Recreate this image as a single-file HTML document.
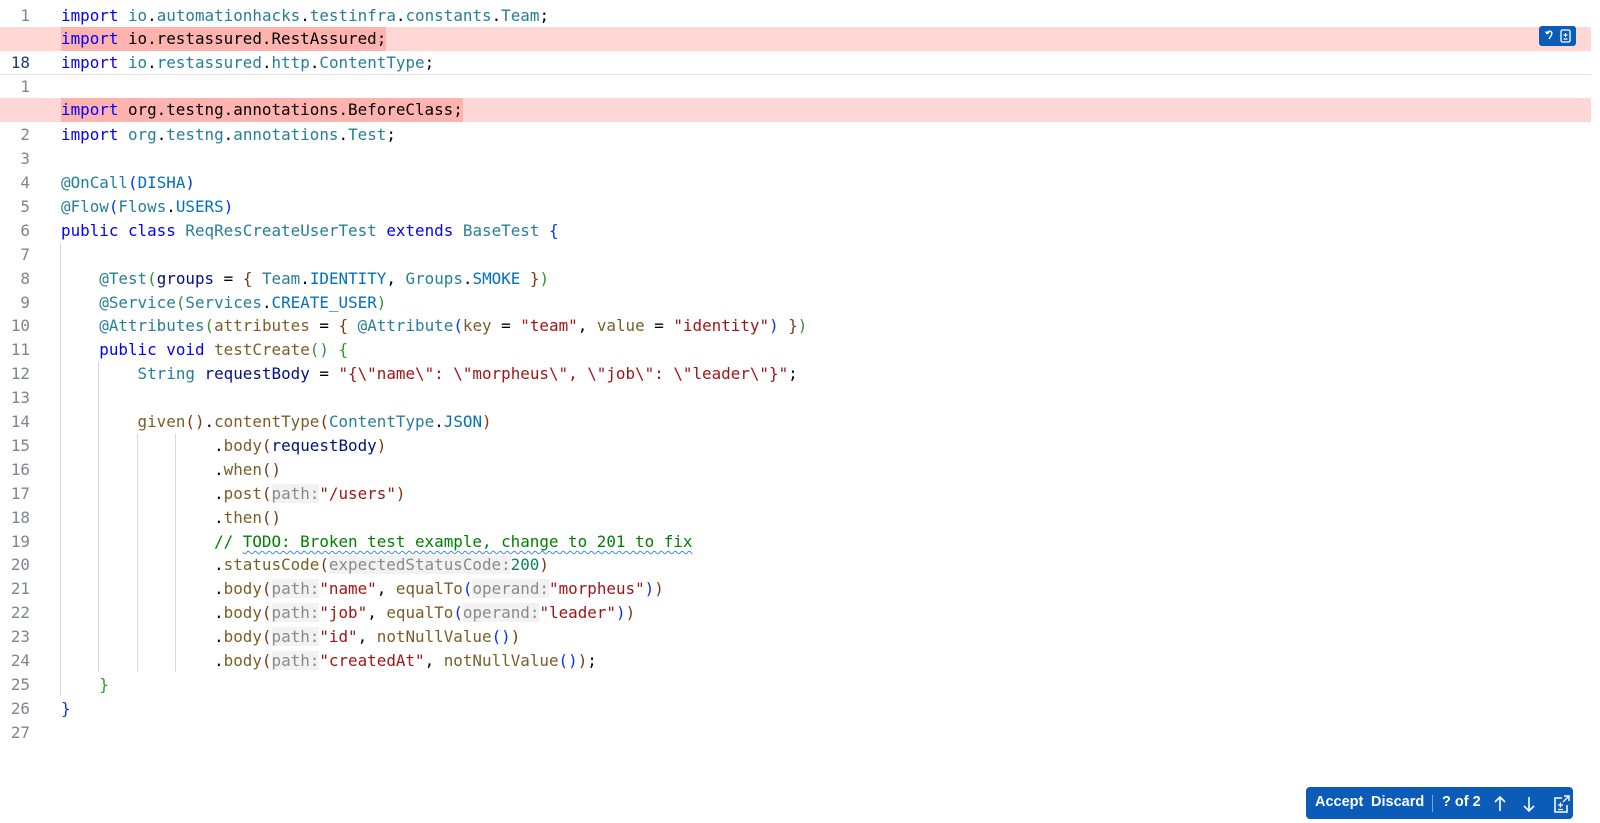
<!DOCTYPE html>
<html><head><meta charset="utf-8"><style>
html,body{margin:0;padding:0;background:#fff;width:1600px;height:823px;overflow:hidden}
.r{position:absolute;left:0;width:1600px;height:23.9px;line-height:23.9px;font-family:"DejaVu Sans Mono","Liberation Mono",monospace;font-size:15.9px;white-space:pre}
.n{position:absolute;left:0;width:30px;text-align:right;color:#7d8590}
.c{position:absolute;left:61px;color:#000}
.del{background:#ffd7d5;width:1591px}
.dk{background:#ffb3ae}
.k{color:#0000ff}.t{color:#267f99}.f{color:#795e26}.s{color:#a31515}.cm{color:#008000}.v{color:#001080}.nu{color:#098658}.cn{color:#0070c1}
.h{color:#8a8a8a;background:#f2f2f2}
.b1{color:#0431fa}.b2{color:#319331}.b3{color:#7b3814}
.g{position:absolute;width:1px;background:#d8d8d8}
.sq{text-decoration:underline wavy #3a8ee6;text-decoration-thickness:1px;text-underline-offset:3px}
.tb{position:absolute;left:1306px;top:787px;width:267px;height:32px;background:#0a5cb8;border-radius:4px;color:#fff;font-family:"Liberation Sans",sans-serif;font-size:14.5px;font-weight:bold}
.tb span{position:absolute;top:7px}
</style></head><body>
<div class="g" style="left:60px;top:243px;height:453px"></div>
<div class="g" style="left:98px;top:362px;height:310px"></div>
<div class="g" style="left:137px;top:434px;height:238px"></div>
<div class="g" style="left:175px;top:434px;height:238px"></div>

<div class="r" style="top:3.5px"><span class="n">1</span><span class="c"><span class="k">import</span> <span class="t">io</span>.<span class="t">automationhacks</span>.<span class="t">testinfra</span>.<span class="t">constants</span>.<span class="t">Team</span>;</span></div>
<div class="r del" style="top:27px"><span class="c dk"><span class="k">import</span> io.restassured.RestAssured;</span></div>
<div class="r" style="top:51px;border-bottom:1px solid #e4e4e4;width:1591px;height:22.9px"><span class="n" style="color:#1f3a7a">18</span><span class="c"><span class="k">import</span> <span class="t">io</span>.<span class="t">restassured</span>.<span class="t">http</span>.<span class="t">ContentType</span>;</span></div>
<div class="r" style="top:75px"><span class="n">1</span></div>
<div class="r del" style="top:98px"><span class="c dk"><span class="k">import</span> org.testng.annotations.BeforeClass;</span></div>
<div class="r" style="top:123px"><span class="n">2</span><span class="c"><span class="k">import</span> <span class="t">org</span>.<span class="t">testng</span>.<span class="t">annotations</span>.<span class="t">Test</span>;</span></div>
<div class="r" style="top:147px"><span class="n">3</span></div>
<div class="r" style="top:171px"><span class="n">4</span><span class="c"><span class="t">@OnCall</span><span class="b1">(</span><span class="cn">DISHA</span><span class="b1">)</span></span></div>
<div class="r" style="top:195px"><span class="n">5</span><span class="c"><span class="t">@Flow</span><span class="b1">(</span><span class="t">Flows</span>.<span class="cn">USERS</span><span class="b1">)</span></span></div>
<div class="r" style="top:219px"><span class="n">6</span><span class="c"><span class="k">public class</span> <span class="t">ReqResCreateUserTest</span> <span class="k">extends</span> <span class="t">BaseTest</span> <span class="b1">{</span></span></div>
<div class="r" style="top:243px"><span class="n">7</span></div>
<div class="r" style="top:267px"><span class="n">8</span><span class="c">    <span class="t">@Test</span><span class="b2">(</span><span class="v">groups</span> = <span class="b3">{</span> <span class="t">Team</span>.<span class="cn">IDENTITY</span>, <span class="t">Groups</span>.<span class="cn">SMOKE</span> <span class="b3">}</span><span class="b2">)</span></span></div>
<div class="r" style="top:291px"><span class="n">9</span><span class="c">    <span class="t">@Service</span><span class="b2">(</span><span class="t">Services</span>.<span class="cn">CREATE_USER</span><span class="b2">)</span></span></div>
<div class="r" style="top:314px"><span class="n">10</span><span class="c">    <span class="t">@Attributes</span><span class="b2">(</span><span class="f">attributes</span> = <span class="b3">{</span> <span class="t">@Attribute</span><span class="b1">(</span><span class="f">key</span> = <span class="s">"team"</span>, <span class="f">value</span> = <span class="s">"identity"</span><span class="b1">)</span> <span class="b3">}</span><span class="b2">)</span></span></div>
<div class="r" style="top:338px"><span class="n">11</span><span class="c">    <span class="k">public void</span> <span class="f">testCreate</span><span class="b2">()</span> <span class="b2">{</span></span></div>
<div class="r" style="top:362px"><span class="n">12</span><span class="c">        <span class="t">String</span> <span class="v">requestBody</span> = <span class="s">"{\"name\": \"morpheus\", \"job\": \"leader\"}"</span>;</span></div>
<div class="r" style="top:386px"><span class="n">13</span></div>
<div class="r" style="top:410px"><span class="n">14</span><span class="c">        <span class="f">given</span><span class="b3">()</span>.<span class="f">contentType</span><span class="b3">(</span><span class="t">ContentType</span>.<span class="cn">JSON</span><span class="b3">)</span></span></div>
<div class="r" style="top:434px"><span class="n">15</span><span class="c">                .<span class="f">body</span><span class="b3">(</span><span class="v">requestBody</span><span class="b3">)</span></span></div>
<div class="r" style="top:458px"><span class="n">16</span><span class="c">                .<span class="f">when</span><span class="b3">()</span></span></div>
<div class="r" style="top:482px"><span class="n">17</span><span class="c">                .<span class="f">post</span><span class="b3">(</span><span class="h">path:</span><span class="s">"/users"</span><span class="b3">)</span></span></div>
<div class="r" style="top:506px"><span class="n">18</span><span class="c">                .<span class="f">then</span><span class="b3">()</span></span></div>
<div class="r" style="top:530px"><span class="n">19</span><span class="c">                <span class="cm">// <span class="sq">TODO: Broken test example, change to 201 to fix</span></span></span></div>
<div class="r" style="top:553px"><span class="n">20</span><span class="c">                .<span class="f">statusCode</span><span class="b3">(</span><span class="h">expectedStatusCode:</span><span class="nu">200</span><span class="b3">)</span></span></div>
<div class="r" style="top:577px"><span class="n">21</span><span class="c">                .<span class="f">body</span><span class="b3">(</span><span class="h">path:</span><span class="s">"name"</span>, <span class="f">equalTo</span><span class="b1">(</span><span class="h">operand:</span><span class="s">"morpheus"</span><span class="b1">)</span><span class="b3">)</span></span></div>
<div class="r" style="top:601px"><span class="n">22</span><span class="c">                .<span class="f">body</span><span class="b3">(</span><span class="h">path:</span><span class="s">"job"</span>, <span class="f">equalTo</span><span class="b1">(</span><span class="h">operand:</span><span class="s">"leader"</span><span class="b1">)</span><span class="b3">)</span></span></div>
<div class="r" style="top:625px"><span class="n">23</span><span class="c">                .<span class="f">body</span><span class="b3">(</span><span class="h">path:</span><span class="s">"id"</span>, <span class="f">notNullValue</span><span class="b1">()</span><span class="b3">)</span></span></div>
<div class="r" style="top:649px"><span class="n">24</span><span class="c">                .<span class="f">body</span><span class="b3">(</span><span class="h">path:</span><span class="s">"createdAt"</span>, <span class="f">notNullValue</span><span class="b1">()</span><span class="b3">)</span>;</span></div>
<div class="r" style="top:673px"><span class="n">25</span><span class="c">    <span class="b2">}</span></span></div>
<div class="r" style="top:697px"><span class="n">26</span><span class="c"><span class="b1">}</span></span></div>
<div class="r" style="top:721px"><span class="n">27</span></div>

<div style="position:absolute;left:1539px;top:26px;width:37px;height:20px;background:#0a5cb8;border-radius:3px">
<svg width="37" height="20" viewBox="0 0 37 20"><path d="M8 7 Q9.5 4.5 12 5.5 Q14 7.5 11.5 10.5 L10 13" fill="none" stroke="#fff" stroke-width="1.4"/><path d="M6.5 5.5 L8 7.8 L10.3 6.5" fill="none" stroke="#fff" stroke-width="1.2"/><rect x="22" y="4" width="9" height="12" rx="1.5" fill="none" stroke="#fff" stroke-width="1.3"/><path d="M24.5 9 H28.5 M26.5 7 V11 M24.5 13 H28.5" stroke="#fff" stroke-width="1.2"/></svg></div>

<div class="tb"><span style="left:9px">Accept</span><span style="left:65px">Discard</span><span style="left:126px;top:8px;width:1px;height:17px;background:#7ea6d9"></span><span style="left:136px">? of 2</span>
<svg style="position:absolute;left:186px;top:7px" width="80" height="20" viewBox="0 0 80 20"><path d="M8 17 V3 M3 8 L8 3 L13 8" fill="none" stroke="#fff" stroke-width="1.6"/><path d="M37 3 V17 M32 12 L37 17 L42 12" fill="none" stroke="#fff" stroke-width="1.6"/><path d="M70 4 H63 V18 H75 V11" fill="none" stroke="#fff" stroke-width="1.5"/><path d="M72 2 H77 V7 M77 2 L71 8" fill="none" stroke="#fff" stroke-width="1.4"/><path d="M66 11 H71 M68.5 8.5 V13.5 M66 15.5 H71" stroke="#fff" stroke-width="1.3"/></svg></div>
</body></html>
